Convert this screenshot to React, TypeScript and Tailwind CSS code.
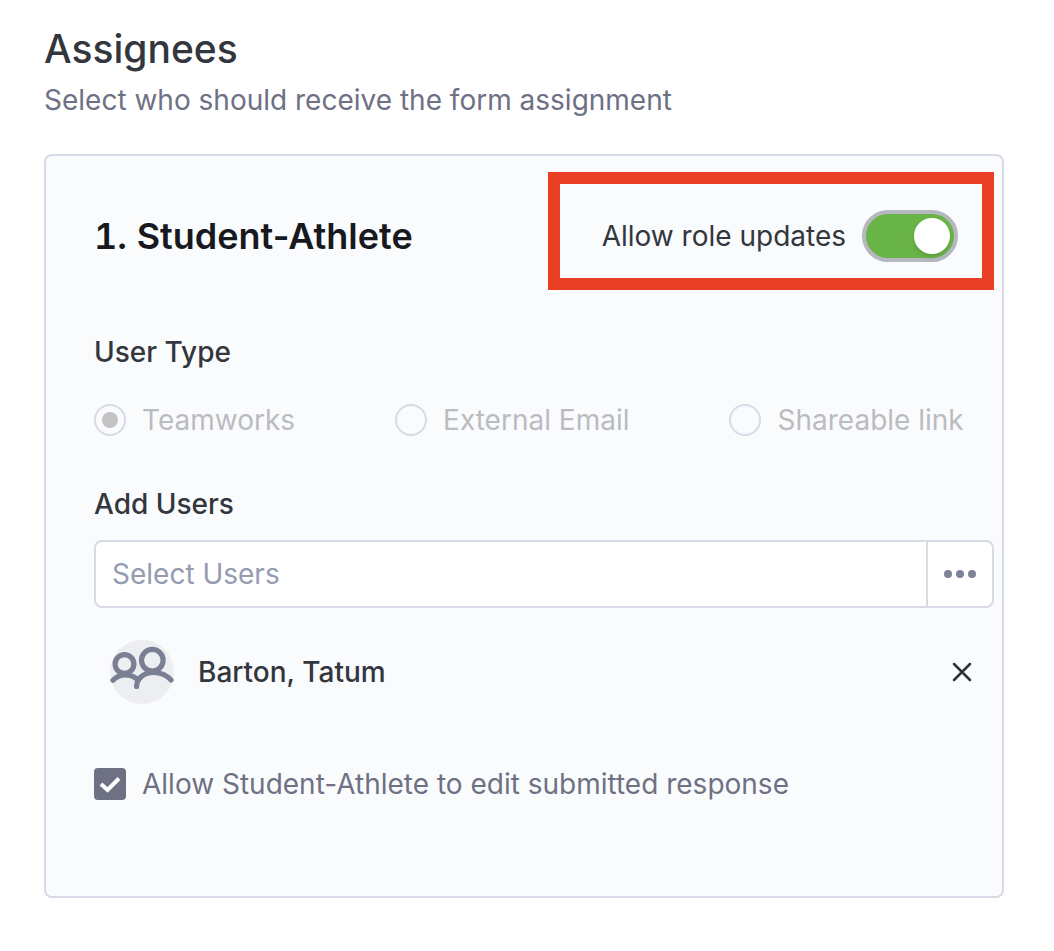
import React, { useState } from 'react';

const USER_TYPES = [
  { id: 'teamworks', label: 'Teamworks' },
  { id: 'external', label: 'External Email' },
  { id: 'link', label: 'Shareable link' },
];

const GroupIcon: React.FC = () => (
  <svg viewBox="0 0 64 64" className="w-16 h-16" fill="none" stroke="#7a7f94" strokeWidth="5.2" strokeLinecap="round" aria-hidden="true">
    <circle cx="32" cy="32" r="32" fill="#edeef2" stroke="none" />
    <circle cx="14.5" cy="24" r="9.4" />
    <circle cx="42.3" cy="20.2" r="10.8" />
    <path d="M3 40.2C6.5 36.6 10.5 34.8 15 34.8C20 34.8 24.5 36.6 28 40" />
    <path d="M26.6 46.5C26.6 39 33 32.5 43.5 32.5C51 32.5 57 35.5 61 40" />
  </svg>
);

const App: React.FC = () => {
  const [allowUpdates, setAllowUpdates] = useState(true);
  const [allowEdit, setAllowEdit] = useState(true);
  const [search, setSearch] = useState('');
  const [users, setUsers] = useState(['Barton, Tatum']);

  const removeUser = (name: string) => {
    setUsers(users.filter(u => u !== name));
  };

  return (
    <div className="min-h-screen bg-white pt-[25px] pl-11 pr-[50px] pb-12 font-['Inter',sans-serif] text-[28px] text-[#33363d]">
      <h1 className="text-[39px] leading-12 font-medium">Assignees</h1>
      <p className="mt-[7px] leading-10 text-[#6e7184]">Select who should receive the form assignment</p>

      <section className="mt-[34px] rounded-lg border-2 border-[#d8dae6] bg-[#fafbfd] pt-4 pl-12 pr-2 pb-24">
        <div className="flex items-center justify-between">
          <h2 className="pt-[10px] text-[36px] leading-12 font-semibold text-[#17191e]">
            <span className="tabular-nums">1. </span>Student-Athlete
          </h2>
          <div className="flex items-center gap-4 border-12 border-[#ea3f25] pt-[26px] pb-4 pl-[42px] pr-6">
            <label htmlFor="role-updates" className="leading-10">Allow role updates</label>
            <input
              id="role-updates"
              type="checkbox"
              role="switch"
              checked={allowUpdates}
              onChange={e => setAllowUpdates(e.target.checked)}
              className="flex h-[52px] w-24 shrink-0 cursor-pointer appearance-none items-center rounded-full border-4 border-[#b5b7c1] bg-[#c9cbd4] px-1 before:h-9 before:w-9 before:rounded-full before:bg-white before:shadow-md before:content-[''] checked:justify-end checked:bg-[#69b447]"
            />
          </div>
        </div>

        {/* User type */}
        <fieldset>
          <legend className="pt-[42px] leading-10 font-medium">User Type</legend>
          <div className="mt-8 flex gap-[100px]">
            {USER_TYPES.map(type => (
              <label key={type.id} className="flex items-center gap-4 leading-8 whitespace-nowrap text-[#bbbcbf]">
                <input
                  type="radio"
                  name="user-type"
                  value={type.id}
                  defaultChecked={type.id === 'teamworks'}
                  disabled
                  className="flex h-8 w-8 shrink-0 appearance-none items-center justify-center rounded-full border-2 border-[#d8dae6] before:h-4 before:w-4 before:rounded-full checked:before:bg-[#c4c4c4] checked:before:content-['']"
                />
                {type.label}
              </label>
            ))}
          </div>
        </fieldset>

        {/* Users */}
        <label htmlFor="add-users" className="mt-12 block leading-10 font-medium">Add Users</label>
        <div className="mt-4 flex h-[68px] rounded-lg border-2 border-[#d8dae6] bg-white">
          <input
            id="add-users"
            type="text"
            value={search}
            onChange={e => setSearch(e.target.value)}
            placeholder="Select Users"
            className="min-w-0 flex-1 px-4 outline-none placeholder:text-[#959bb0]"
          />
          <button type="button" aria-label="More options" className="flex w-[66px] items-center justify-center border-l-2 border-[#d8dae6]">
            <svg viewBox="0 0 32 8" className="h-2 w-8" fill="#7d8297" aria-hidden="true">
              <circle cx="4" cy="4" r="4" />
              <circle cx="16" cy="4" r="4" />
              <circle cx="28" cy="4" r="4" />
            </svg>
          </button>
        </div>
        <ul className="mt-8">
          {users.map(user => (
            <li key={user} className="flex items-center pl-4 pr-4">
              <GroupIcon />
              <span className="ml-6 flex-1 font-medium">{user}</span>
              <button type="button" aria-label={`Remove ${user}`} onClick={() => removeUser(user)} className="p-1">
                <svg viewBox="0 0 24 24" className="h-6 w-6" fill="none" stroke="#303238" strokeWidth="2.5" strokeLinecap="round" aria-hidden="true">
                  <path d="M4 4L20 20M20 4L4 20" />
                </svg>
              </button>
            </li>
          ))}
        </ul>

        <label className="mt-16 flex items-center gap-4 leading-8 text-[#6e7184]">
          <span className="relative h-8 w-8 shrink-0">
            <input
              type="checkbox"
              checked={allowEdit}
              onChange={e => setAllowEdit(e.target.checked)}
              className="peer block h-8 w-8 appearance-none rounded-sm border-2 border-[#6e7184] checked:bg-[#6e7184]"
            />
            <svg viewBox="0 0 32 32" className="pointer-events-none absolute inset-0 hidden h-8 w-8 peer-checked:block" fill="none" stroke="#fff" strokeWidth="4" aria-hidden="true">
              <path d="M7 16L13.5 22L25 10.5" />
            </svg>
          </span>
          Allow Student-Athlete to edit submitted response
        </label>
      </section>
    </div>
  );
};

export default App;
